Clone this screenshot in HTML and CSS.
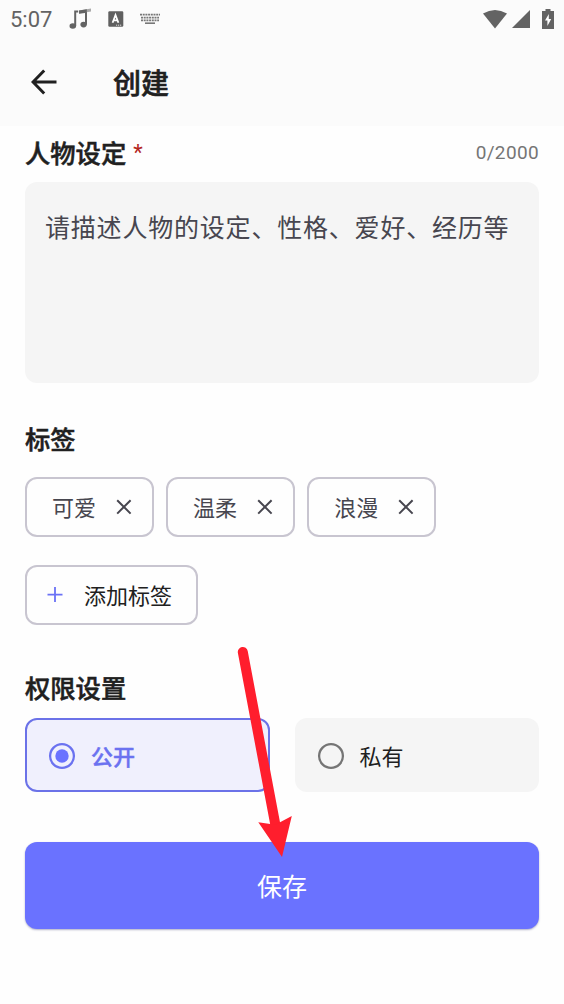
FILE: index.html
```html
<!DOCTYPE html>
<html lang="zh-CN">
<head>
<meta charset="utf-8">
<title>创建</title>
<link rel="stylesheet" href="styles.css">
</head>
<body>
<div class="screen">
  <header class="top">
    <div class="status">
      <span class="clock">5:07</span>
      <svg class="ic-music" width="24" height="24" viewBox="0 0 24 24"><ellipse cx="3.8" cy="19" rx="3.3" ry="2.8" fill="#636363"/><ellipse cx="14.6" cy="17.6" rx="3.2" ry="2.8" fill="#636363"/><path d="M6.2 19V4.5h3M17 17.5V4.8" fill="none" stroke="#636363" stroke-width="2"/><path d="M10 3.6L22 1.4v3L10 6.4z" fill="#aaa"/><path d="M10 3.6l7.8-1.4v3.6L10 6.8z" fill="#636363"/></svg>
      <svg class="ic-a" width="16" height="16" viewBox="0 0 16 16"><rect x=".3" y=".3" width="15" height="15.4" rx="1.2" fill="#606060"/><path d="M4.6 11.8L7.5 4l2.9 7.8M5.6 9.3h3.8" fill="none" stroke="#fff" stroke-width="1.8"/><path d="M8 14.2h6" stroke="#ddd" stroke-width="1" stroke-dasharray="1.2 .8"/></svg>
      <svg class="ic-kbd" width="20" height="12" viewBox="0 0 20 12"><path d="M0 1.6h20M1 4.6h18M1 7.4h18" stroke="#777" stroke-width="1.9" stroke-dasharray="2 .7"/><path d="M5 10.2h10" stroke="#777" stroke-width="1.6"/></svg>
      <svg class="ic-wifi" width="24" height="19" viewBox="0 0 24 19"><path d="M0 3.6Q12-3.4 24 3.6L12 18.6z" fill="#636363"/></svg>
      <svg class="ic-cell" width="18" height="18" viewBox="0 0 18 18"><path d="M18 0v18H0z" fill="#636363"/></svg>
      <svg class="ic-bat" width="12" height="20" viewBox="0 0 12 20"><path d="M3.5 0h5v2H12v18H0V2h3.5z" fill="#636363"/><path d="M6.8 5L3 11.6h2.4V17l3.8-7H6.8z" fill="#fff"/></svg>
    </div>
    <div class="appbar">
      <svg class="back" width="26" height="26" viewBox="0 0 26 26"><path d="M25.5 13H2.5M13.2 1.5L2 13l11.2 11.5" fill="none" stroke="#202020" stroke-width="3"/></svg>
      <h1 class="title">创建</h1>
    </div>
  </header>
  <main class="content">
    <div class="label-row">
      <h2 class="label">人物设定<span class="req">*</span></h2>
      <span class="count">0/2000</span>
    </div>
    <div class="textarea">请描述人物的设定、性格、爱好、经历等</div>
    <h2 class="label label-tags">标签</h2>
    <div class="chips">
      <div class="chip"><span>可爱</span><svg width="16" height="16" viewBox="0 0 16 16"><path d="M1.2 1.2l13.4 13.4M14.6 1.2L1.2 14.6" stroke="#47464f" stroke-width="2"/></svg></div>
      <div class="chip"><span>温柔</span><svg width="16" height="16" viewBox="0 0 16 16"><path d="M1.2 1.2l13.4 13.4M14.6 1.2L1.2 14.6" stroke="#47464f" stroke-width="2"/></svg></div>
      <div class="chip"><span>浪漫</span><svg width="16" height="16" viewBox="0 0 16 16"><path d="M1.2 1.2l13.4 13.4M14.6 1.2L1.2 14.6" stroke="#47464f" stroke-width="2"/></svg></div>
      <div class="chip add"><svg width="16" height="16" viewBox="0 0 16 16"><path d="M.5 7.6h15M8 .1v15" stroke="#6b72f5" stroke-width="1.8"/></svg><span>添加标签</span></div>
    </div>
    <h2 class="label label-access">权限设置</h2>
    <div class="options">
      <div class="option selected"><svg width="28" height="28" viewBox="0 0 28 28"><circle cx="14" cy="14" r="11.9" fill="none" stroke="#6b72f0" stroke-width="2.3"/><circle cx="14" cy="14" r="6.7" fill="#6a72ff"/></svg><span>公开</span></div>
      <div class="option"><svg width="28" height="28" viewBox="0 0 28 28"><circle cx="14" cy="14" r="11.9" fill="none" stroke="#757575" stroke-width="2.3"/></svg><span>私有</span></div>
    </div>
    <div class="save">保存</div>
  </main>
  <svg class="pointer" width="60" height="220" viewBox="235 640 60 220"><path d="M242.8 652L275.6 826" stroke="#ff1e2d" stroke-width="10" stroke-linecap="round"/><path d="M282 857L258.3 822.3l17 2.5 16.5-8.8z" fill="#ff1e2d"/></svg>
</div>
</body>
</html>
```
FILE: styles.css
```css
* { box-sizing: border-box; }
body { margin: 0; background: #fefefe; font-family: Roboto, "Noto Sans CJK SC", sans-serif; color: #202020; }
.screen { position: relative; width: 564px; height: 1004px; overflow: hidden; background: #fefefe; }
svg { display: block; flex: none; }
.top { height: 126px; background: #fbfbfb; }
.status { height: 38px; display: flex; align-items: center; padding: 0 10px; }
.clock { width: 59px; font-size: 22px; line-height: 38px; color: #636363; padding-top: 2px; }
.ic-a { margin-left: 15px; }
.ic-kbd { margin-left: 16px; }
.ic-wifi { margin-left: auto; }
.ic-cell { margin-left: 5px; }
.ic-bat { margin: 0 0 0 12px; }
.appbar { height: 88px; display: flex; align-items: center; padding-left: 31px; }
.title { margin: 0 0 0 56px; padding-top: 5px; font-size: 28px; line-height: 40px; font-weight: 500; -webkit-text-stroke: .6px #202020; }
.content { padding: 0 25px; }
.label-row { height: 56px; display: flex; justify-content: space-between; align-items: center; }
.label { margin: 0; padding-top: 1px; font-size: 25.3px; line-height: 38px; font-weight: 500; white-space: nowrap; -webkit-text-stroke: .5px #202020; }
.req { margin-left: 7px; color: #b3261e; font-weight: 400; font-size: 22px; line-height: 1; vertical-align: 3px; -webkit-text-stroke: 0; }
.count { margin-bottom: 4px; font-size: 19px; color: #757575; letter-spacing: .35px; }
.textarea { height: 201px; padding: 27px 20px; border-radius: 12px; background: #f5f5f5; color: #47464f; font-size: 25px; line-height: 40px; letter-spacing: .8px; white-space: nowrap; }
.label-tags { margin-top: 38px; }
.chips { display: flex; flex-wrap: wrap; gap: 28px 12px; margin-top: 17px; }
.chip { width: 129.1px; height: 60px; border: 2px solid #c8c5d0; border-radius: 12px; display: flex; align-items: center; justify-content: space-between; padding: 0 20px 0 25px; font-size: 22px; line-height: 32px; color: #47464f; }
.chip span, .option span { padding-top: 4px; }
.add { width: 173px; padding: 0 24px 0 20px; color: #202020; }
.label-access { margin-top: 45px; }
.options { display: grid; grid-template-columns: 1fr 1fr; gap: 25px; margin-top: 9px; }
.option { height: 74px; border-radius: 12px; background: #f5f5f5; display: flex; align-items: center; gap: 15px; padding: 1px 0 0 22px; font-size: 22px; line-height: 32px; }
.selected { border: 2px solid #6b72e8; padding-left: 21px; background: #f0f0fd; color: #6b72f0; font-weight: 500; -webkit-text-stroke: .4px #6b72f0; }
.save { height: 87px; margin-top: 50px; padding-top: 2px; border-radius: 12px; background: #6a72ff; color: #fff; font-size: 25px; line-height: 87px; text-align: center; box-shadow: 0 1px 2px rgba(60,60,120,.4); }
.pointer { position: absolute; left: 235px; top: 640px; }
```
